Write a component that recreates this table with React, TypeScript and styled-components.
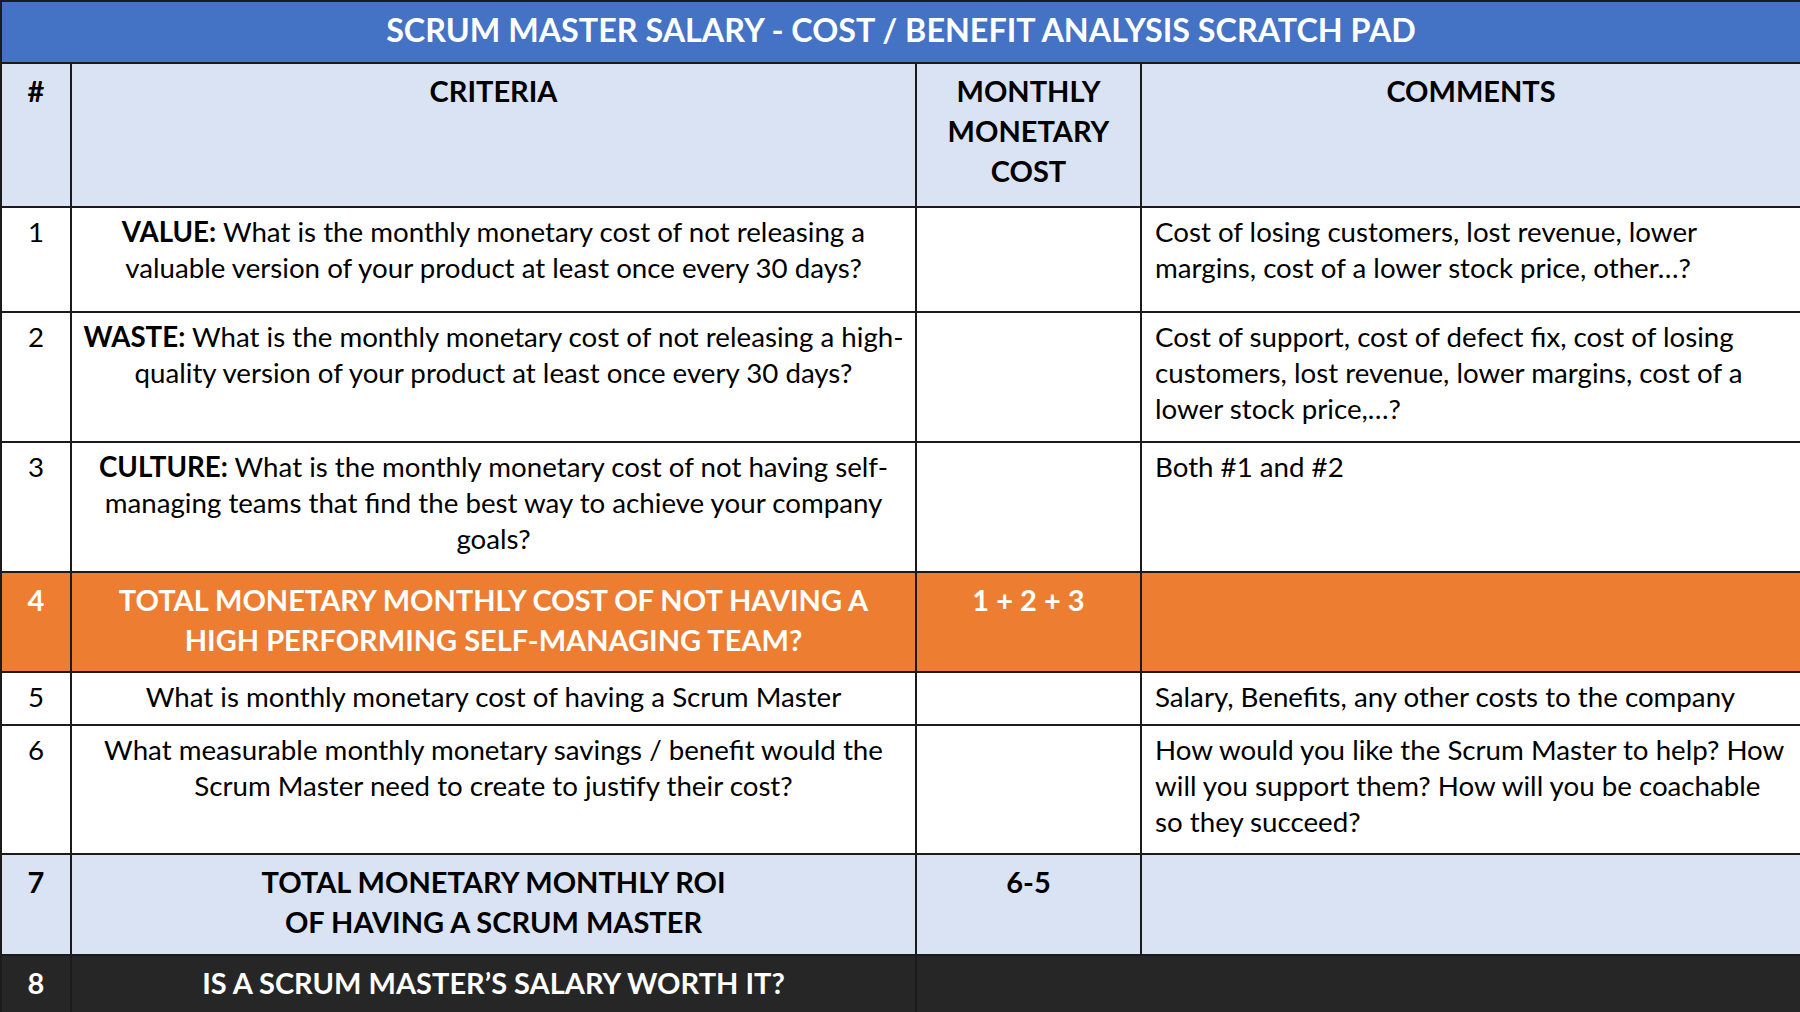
import React from 'react';
import { styled, createGlobalStyle } from 'styled-components';

const GlobalStyle = createGlobalStyle`
  html, body {
    margin: 0;
    padding: 0;
    background: #fff;
    overflow: hidden;
  }
  body {
    font-family: Lato, 'Open Sans', sans-serif;
    color: #000;
  }
`;

type Tone = 'plain' | 'header' | 'orange' | 'dark';

const toneBg: Record<Tone, string> = {
  plain: '#ffffff',
  header: '#dae3f3',
  orange: '#ed7d31',
  dark: '#262626',
};

const toneFg: Record<Tone, string> = {
  plain: '#000',
  header: '#000',
  orange: '#fff',
  dark: '#fff',
};

const Sheet = styled.table`
  width: 1800px;
  border-collapse: collapse;
  table-layout: fixed;
`;

const TitleCell = styled.th`
  height: 55px;
  background: #4472c4;
  color: #fff;
  font-size: 32.3px;
  line-height: 40px;
  font-weight: 700;
  text-align: center;
  vertical-align: middle;
  border: 2px solid #1b1b1b;
  padding: 0 0 5px;
`;

const Row = styled.tr<{ $h: number; $tone: Tone }>`
  height: ${(p) => p.$h}px;
  background: ${(p) => toneBg[p.$tone]};
  color: ${(p) => toneFg[p.$tone]};
`;

const Cell = styled.td<{ $align?: 'left' | 'center'; $bold?: boolean; $big?: boolean }>`
  border: 2px solid #1b1b1b;
  vertical-align: top;
  text-align: ${(p) => p.$align ?? 'center'};
  font-size: ${(p) => (p.$big ? 29 : 27.7)}px;
  line-height: ${(p) => (p.$big ? 40 : 36)}px;
  font-weight: ${(p) => (p.$bold ? 700 : 400)};
  padding: ${(p) => (p.$big ? '7px 10px 0' : p.$align === 'left' ? '6px 8px 0 13px' : '6px 8px 0')};
  white-space: nowrap;
  overflow: hidden;
`;

const Label = styled.b`
  font-weight: 700;
`;

function App() {
  return (
    <>
      <GlobalStyle />
      <Sheet>
        <colgroup>
          <col style={{ width: 70 }} />
          <col style={{ width: 845 }} />
          <col style={{ width: 225 }} />
          <col style={{ width: 660 }} />
        </colgroup>
        <thead>
          <tr>
            <TitleCell colSpan={4}>SCRUM MASTER SALARY - COST / BENEFIT ANALYSIS SCRATCH PAD</TitleCell>
          </tr>
        </thead>
        <tbody>
          <Row $h={144} $tone="header">
            <Cell $bold $big>#</Cell>
            <Cell $bold $big>CRITERIA</Cell>
            <Cell $bold $big>
              MONTHLY
              <br />
              MONETARY
              <br />
              COST
            </Cell>
            <Cell $bold $big>COMMENTS</Cell>
          </Row>
          <Row $h={105} $tone="plain">
            <Cell>1</Cell>
            <Cell>
              <Label>VALUE:</Label> What is the monthly monetary cost of not releasing a
              <br />
              valuable version of your product at least once every 30 days?
            </Cell>
            <Cell />
            <Cell $align="left">
              Cost of losing customers, lost revenue, lower
              <br />
              margins, cost of a lower stock price, other…?
            </Cell>
          </Row>
          <Row $h={130} $tone="plain">
            <Cell>2</Cell>
            <Cell>
              <Label>WASTE:</Label> What is the monthly monetary cost of not releasing a high-
              <br />
              quality version of your product at least once every 30 days?
            </Cell>
            <Cell />
            <Cell $align="left">
              Cost of support, cost of defect fix, cost of losing
              <br />
              customers, lost revenue, lower margins, cost of a
              <br />
              lower stock price,…?
            </Cell>
          </Row>
          <Row $h={130} $tone="plain">
            <Cell>3</Cell>
            <Cell>
              <Label>CULTURE:</Label> What is the monthly monetary cost of not having self-
              <br />
              managing teams that find the best way to achieve your company
              <br />
              goals?
            </Cell>
            <Cell />
            <Cell $align="left">Both #1 and #2</Cell>
          </Row>
          <Row $h={100} $tone="orange">
            <Cell $bold $big>4</Cell>
            <Cell $bold $big>
              TOTAL MONETARY MONTHLY COST OF NOT HAVING A
              <br />
              HIGH PERFORMING SELF-MANAGING TEAM?
            </Cell>
            <Cell $bold $big>1 + 2 + 3</Cell>
            <Cell />
          </Row>
          <Row $h={53} $tone="plain">
            <Cell>5</Cell>
            <Cell>What is monthly monetary cost of having a Scrum Master</Cell>
            <Cell />
            <Cell $align="left">Salary, Benefits, any other costs to the company</Cell>
          </Row>
          <Row $h={129} $tone="plain">
            <Cell>6</Cell>
            <Cell>
              What measurable monthly monetary savings / benefit would the
              <br />
              Scrum Master need to create to justify their cost?
            </Cell>
            <Cell />
            <Cell $align="left">
              How would you like the Scrum Master to help? How
              <br />
              will you support them? How will you be coachable
              <br />
              so they succeed?
            </Cell>
          </Row>
          <Row $h={101} $tone="header">
            <Cell $bold $big>7</Cell>
            <Cell $bold $big>
              TOTAL MONETARY MONTHLY ROI
              <br />
              OF HAVING A SCRUM MASTER
            </Cell>
            <Cell $bold $big>6-5</Cell>
            <Cell />
          </Row>
          <Row $h={70} $tone="dark">
            <Cell $bold $big>8</Cell>
            <Cell $bold $big>IS A SCRUM MASTER’S SALARY WORTH IT?</Cell>
            <Cell colSpan={2} />
          </Row>
        </tbody>
      </Sheet>
    </>
  );
}

export default App;
